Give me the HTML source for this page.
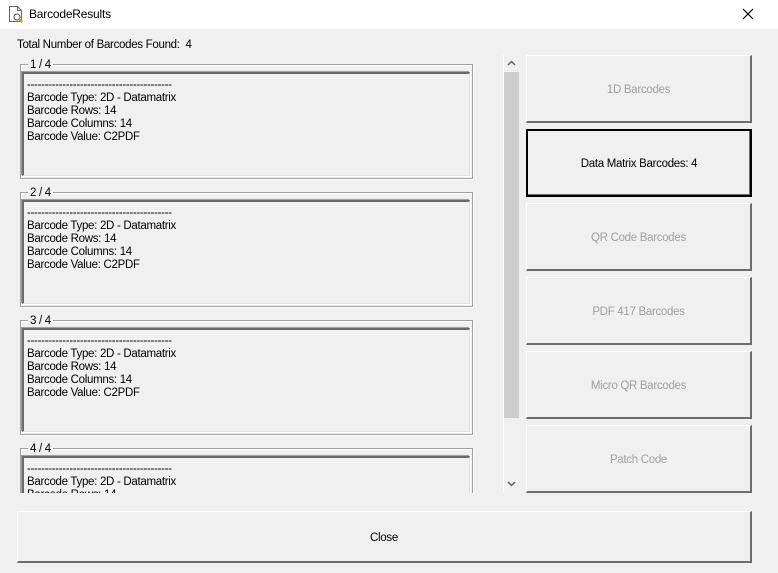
<!DOCTYPE html>
<html><head><style>
*{margin:0;padding:0;box-sizing:border-box}
body{width:778px;height:573px;background:#f0f0f0;font-family:"Liberation Sans",sans-serif;font-size:11.5px;letter-spacing:-0.3px;color:#000;position:relative;overflow:hidden}
.abs{position:absolute}
.title{left:0;top:0;width:778px;height:29px;background:#fff}
.grp{position:absolute;left:20px;width:453px;border:1px solid #a0a0a0;box-shadow:inset 1px 1px 0 #fff,1px 1px 0 #fff}
.grp .lbl{position:absolute;left:7px;top:-7px;background:#f0f0f0;padding:0 2px;line-height:14px}
.tb{position:absolute;left:1px;top:7px;right:2px;bottom:2px;border-top:2px solid #696969;border-left:2px solid #696969;border-right:1px solid #e3e3e3;border-bottom:1px solid #e3e3e3;box-shadow:-1px -1px 0 #a0a0a0, 1px 1px 0 #fff;padding:5px 0 0 3px;line-height:13px;overflow:hidden}
.btn{position:absolute;left:526px;width:226px;height:68px;border-top:1px solid #fff;border-left:1px solid #fff;border-right:2px solid #6d6d6d;border-bottom:2px solid #6d6d6d;display:flex;align-items:center;justify-content:center;color:#a0a0a0;padding-top:2px}
</style></head><body>
<div class="abs title">
<svg class="abs" style="left:8px;top:6px" width="16" height="17" viewBox="0 0 16 17"><path d="M1.5 0.5h8l4 4v11h-12z" fill="#fff" stroke="#666"/><path d="M9.5 0.5v4h4" fill="none" stroke="#666"/><circle cx="9" cy="11" r="3" fill="none" stroke="#555"/><path d="M11 13l3 3" stroke="#c8a000" stroke-width="2"/></svg>
<div class="abs" style="left:29px;top:7px;font-size:12px;letter-spacing:-0.2px">BarcodeResults</div>
<svg class="abs" style="left:742px;top:8px" width="12" height="12" viewBox="0 0 12 12"><path d="M1 1L11 11M11 1L1 11" stroke="#000" stroke-width="1.2"/></svg>
</div>
<div class="abs" style="left:17px;top:39px">Total Number of Barcodes Found:&nbsp; 4</div>

<div class="abs" style="left:0;top:57px;width:500px;height:436px;overflow:hidden">
<div class="grp" style="top:7px;height:115px"><div class="lbl">1 / 4</div><div class="tb">-----------------------------------------<br>Barcode Type: 2D - Datamatrix<br>Barcode Rows: 14<br>Barcode Columns: 14<br>Barcode Value: C2PDF</div></div>
<div class="grp" style="top:135px;height:115px"><div class="lbl">2 / 4</div><div class="tb">-----------------------------------------<br>Barcode Type: 2D - Datamatrix<br>Barcode Rows: 14<br>Barcode Columns: 14<br>Barcode Value: C2PDF</div></div>
<div class="grp" style="top:263px;height:115px"><div class="lbl">3 / 4</div><div class="tb">-----------------------------------------<br>Barcode Type: 2D - Datamatrix<br>Barcode Rows: 14<br>Barcode Columns: 14<br>Barcode Value: C2PDF</div></div>
<div class="grp" style="top:391px;height:115px"><div class="lbl">4 / 4</div><div class="tb">-----------------------------------------<br>Barcode Type: 2D - Datamatrix<br>Barcode Rows: 14<br>Barcode Columns: 14<br>Barcode Value: C2PDF</div></div>
</div>

<div class="abs" style="left:503px;top:55px;width:1px;height:438px;background:#fff"></div>
<div class="abs" style="left:504px;top:72px;width:15px;height:346px;background:#cdcdcd"></div>
<svg class="abs" style="left:507px;top:60px" width="9" height="6" viewBox="0 0 9 6"><path d="M1 5L4.5 1.5L8 5" fill="none" stroke="#606060" stroke-width="1.5"/></svg>
<svg class="abs" style="left:507px;top:481px" width="9" height="6" viewBox="0 0 9 6"><path d="M1 1L4.5 4.5L8 1" fill="none" stroke="#606060" stroke-width="1.5"/></svg>

<div class="btn" style="top:55px">1D Barcodes</div>
<div class="btn" style="top:129px;border:2px solid #000;color:#000;box-shadow:inset -1px -1px 0 #6d6d6d">Data Matrix Barcodes: 4</div>
<div class="btn" style="top:203px">QR Code Barcodes</div>
<div class="btn" style="top:277px">PDF 417 Barcodes</div>
<div class="btn" style="top:351px">Micro QR Barcodes</div>
<div class="btn" style="top:425px">Patch Code</div>

<div class="btn" style="left:17px;top:511px;width:735px;height:52px;color:#000">Close</div>
</body></html>
